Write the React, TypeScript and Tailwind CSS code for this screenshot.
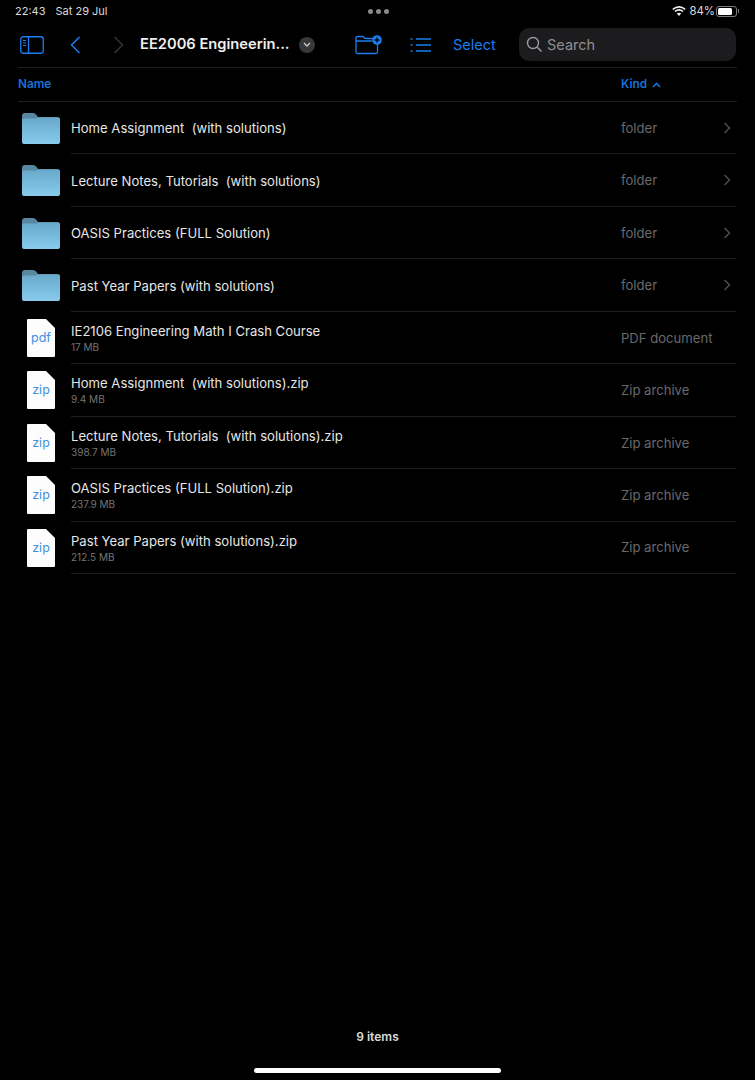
import React from "react";

const rows = [
  { t: "folder", name: "Home Assignment\u00a0 (with solutions)", kind: "folder" },
  { t: "folder", name: "Lecture Notes, Tutorials\u00a0 (with solutions)", kind: "folder" },
  { t: "folder", name: "OASIS Practices (FULL Solution)", kind: "folder" },
  { t: "folder", name: "Past Year Papers (with solutions)", kind: "folder" },
  { t: "pdf", name: "IE2106 Engineering Math I Crash Course", size: "17 MB", kind: "PDF document" },
  { t: "zip", name: "Home Assignment\u00a0 (with solutions).zip", size: "9.4 MB", kind: "Zip archive" },
  { t: "zip", name: "Lecture Notes, Tutorials\u00a0 (with solutions).zip", size: "398.7 MB", kind: "Zip archive" },
  { t: "zip", name: "OASIS Practices (FULL Solution).zip", size: "237.9 MB", kind: "Zip archive" },
  { t: "zip", name: "Past Year Papers (with solutions).zip", size: "212.5 MB", kind: "Zip archive" },
];

function FolderIcon() {
  return (
    <svg width="38" height="31" viewBox="0 0 38 31" className="block">
      <defs>
        <linearGradient id="fg" x1="0" y1="0" x2="0" y2="1">
          <stop offset="0" stopColor="#68a9ca" />
          <stop offset="1" stopColor="#88cbec" />
        </linearGradient>
      </defs>
      <path d="M0 3 Q0 0 3 0 H11 Q13 0 14.5 2 L16 4 H35 Q38 4 38 7 V12 H0 Z" fill="#58889f" />
      <path d="M0 7.5 Q0 5.5 2 5.5 H14 L16.5 4.5 H36 Q38 4.5 38 6.5 V29 Q38 31 36 31 H2 Q0 31 0 29 Z" fill="url(#fg)" />
    </svg>
  );
}

function DocIcon({ label }: { label: string }) {
  return (
    <div className="relative w-[28px] h-[38px]">
      <svg width="28" height="38" viewBox="0 0 28 38" className="block">
        <path d="M1 0 H19 L28 9 V37 Q28 38 27 38 H1 Q0 38 0 37 V1 Q0 0 1 0 Z" fill="#fdfdfd" />
      </svg>
      <span className="absolute left-0 right-0 top-[11px] text-center text-[12.5px] leading-[16px] text-[#3f8fe0]">{label}</span>
    </div>
  );
}

function Row({ r }: { r: (typeof rows)[number] }) {
  return (
    <div className="flex h-[52.45px] items-stretch">
      <div className="w-[71px] shrink-0 flex items-center">
        {r.t === "folder" ? (
          <div className="ml-[22px]"><FolderIcon /></div>
        ) : (
          <div className="ml-[27px]"><DocIcon label={r.t} /></div>
        )}
      </div>
      <div className="flex-1 flex border-b border-[#1e1e1e] mr-[19px]">
        <div className={r.size ? "w-[550px] flex flex-col justify-center pt-[1px]" : "w-[550px] flex flex-col justify-center pt-[2px]"}>
          <div className="text-[13.1px] leading-[17px] text-[#e6e6e6]">{r.name}</div>
          {r.size && <div className="text-[10px] leading-[12px] mt-[1px] text-[#747474]">{r.size}</div>}
        </div>
        <div className="flex-1 flex items-center justify-between pt-[2px] text-[13.1px] text-[#69696c]">
          <span>{r.kind}</span>
          {r.t === "folder" && (
            <svg width="8" height="12" viewBox="0 0 8 12" className="mr-[5px] -mt-[2px]">
              <path d="M1.5 1 L6.5 6 L1.5 11" fill="none" stroke="#505052" strokeWidth="1.4" />
            </svg>
          )}
        </div>
      </div>
    </div>
  );
}

export default function App() {
  return (
    <div className="relative w-[755px] h-[1080px] bg-black overflow-hidden flex flex-col text-[#e6e6e6] font-['Inter','Liberation_Sans',sans-serif]">
      {/* status bar */}
      <div className="relative h-[23px] flex items-center justify-between pl-[15px] pr-[16px] text-[11px] text-[#dcdcdc]">
        <div className="flex gap-[10px]"><span>22:43</span><span>Sat 29 Jul</span></div>
        <div className="absolute left-[368px] top-[9px] flex gap-[3px]">
          <span className="w-[5px] h-[5px] rounded-full bg-[#8a8a8a]" />
          <span className="w-[5px] h-[5px] rounded-full bg-[#8a8a8a]" />
          <span className="w-[5px] h-[5px] rounded-full bg-[#8a8a8a]" />
        </div>
        <div className="flex items-center">
          <svg width="14" height="10" viewBox="0 0 14 10">
            <path d="M7 10 L4.8 7.6 Q7 5.8 9.2 7.6 Z" fill="#efefef" />
            <path d="M2.9 5.5 Q7 2.2 11.1 5.5" fill="none" stroke="#efefef" strokeWidth="1.6" />
            <path d="M0.8 3.3 Q7 -1.6 13.2 3.3" fill="none" stroke="#efefef" strokeWidth="1.6" />
          </svg>
          <span className="ml-[3px] text-[11.4px]">84%</span>
          <div className="ml-[1px] flex items-center">
            <div className="w-[21px] h-[11px] rounded-[3px] border border-[#7d7d7d] p-[1px]">
              <div className="h-full w-[84%] rounded-[1.5px] bg-white" />
            </div>
            <div className="w-[1px] h-[4px] bg-[#7d7d7d] ml-[1px]" />
          </div>
        </div>
      </div>

      {/* toolbar */}
      <div className="relative h-[45px] mx-[18px] flex items-center border-b border-[#1e1e1e] pb-[1px]">
        <svg width="24" height="18" viewBox="0 0 24 18" className="ml-[2px] shrink-0">
          <rect x="0.75" y="0.75" width="22.5" height="16.5" rx="2.5" fill="none" stroke="#1b7ef0" strokeWidth="1.3" />
          <path d="M8.5 1 V17" stroke="#1b7ef0" strokeWidth="1.3" />
          <path d="M3 4.5 H6 M3 7 H6 M3 9.5 H6" stroke="#1b7ef0" strokeWidth="1.1" />
        </svg>
        <svg width="11" height="18" viewBox="0 0 11 18" className="ml-[26px] shrink-0">
          <path d="M9.5 1 L1.5 9 L9.5 17" fill="none" stroke="#1b7ef0" strokeWidth="1.5" />
        </svg>
        <svg width="11" height="18" viewBox="0 0 11 18" className="ml-[32px] shrink-0">
          <path d="M1.5 1 L9.5 9 L1.5 17" fill="none" stroke="#333336" strokeWidth="1.5" />
        </svg>
        <span className="ml-[16px] w-[150px] text-[14.7px] font-semibold text-[#efefef] whitespace-nowrap shrink-0">EE2006 Engineerin...</span>
        <div className="ml-[9px] w-[16px] h-[16px] rounded-full bg-[#38383a] flex items-center justify-center shrink-0">
          <svg width="8" height="5" viewBox="0 0 8 5"><path d="M1 1 L4 4 L7 1" fill="none" stroke="#c8c8c8" strokeWidth="1.3" /></svg>
        </div>
        <svg width="27" height="20" viewBox="0 0 27 20" className="ml-[40px] shrink-0">
          <path d="M1 6 V3 Q1 1.5 2.5 1.5 H8 L10 3.5 H18 M1 6 H17 M1 6 V17 Q1 18.5 2.5 18.5 H21 Q22.5 18.5 22.5 17 V9" fill="none" stroke="#1b7ef0" strokeWidth="1.3" />
          <circle cx="22" cy="5" r="4.8" fill="#1b7ef0" />
          <path d="M22 2.5 V7.5 M19.5 5 H24.5" stroke="#000" strokeWidth="1.3" />
        </svg>
        <svg width="21" height="16" viewBox="0 0 21 16" className="ml-[28px] shrink-0">
          <path d="M6 2 H21 M6 8 H21 M6 14 H21" stroke="#1b7ef0" strokeWidth="1.3" />
          <path d="M0.5 2 H2.5 M0.5 8 H2.5 M0.5 14 H2.5" stroke="#1b7ef0" strokeWidth="1.6" />
        </svg>
        <span className="ml-[22px] w-[43px] text-[14.5px] text-[#1b7ef0] shrink-0">Select</span>
        <div className="ml-[23px] w-[217px] h-[33px] rounded-[10px] bg-[#1c1c1e] flex items-center pl-[7px] shrink-0">
          <svg width="17" height="17" viewBox="0 0 17 17">
            <circle cx="7" cy="7" r="5.5" fill="none" stroke="#98989d" strokeWidth="1.4" />
            <path d="M11 11 L15.5 15.5" stroke="#98989d" strokeWidth="1.6" />
          </svg>
          <span className="ml-[4px] text-[14.5px] text-[#8e8e93]">Search</span>
        </div>
      </div>

      {/* header */}
      <div className="h-[34px] mx-[18px] flex items-center border-b border-[#1e1e1e] text-[11.8px] font-semibold text-[#1671d8]">
        <span className="w-[603px]">Name</span>
        <span>Kind</span>
        <svg width="9" height="6" viewBox="0 0 9 6" className="ml-[5px]">
          <path d="M1 5 L4.5 1.5 L8 5" fill="none" stroke="#1671d8" strokeWidth="1.6" />
        </svg>
      </div>

      {/* rows */}
      <div className="flex flex-col">
        {rows.map((r) => <Row key={r.name} r={r} />)}
      </div>

      <div className="mt-auto flex flex-col items-center">
        <div className="text-[12px] font-semibold text-[#dcdcdc] leading-[14px]">9 items</div>
        <div className="mt-[24px] mb-[7px] w-[247px] h-[5px] rounded-full bg-white" />
      </div>
    </div>
  );
}
